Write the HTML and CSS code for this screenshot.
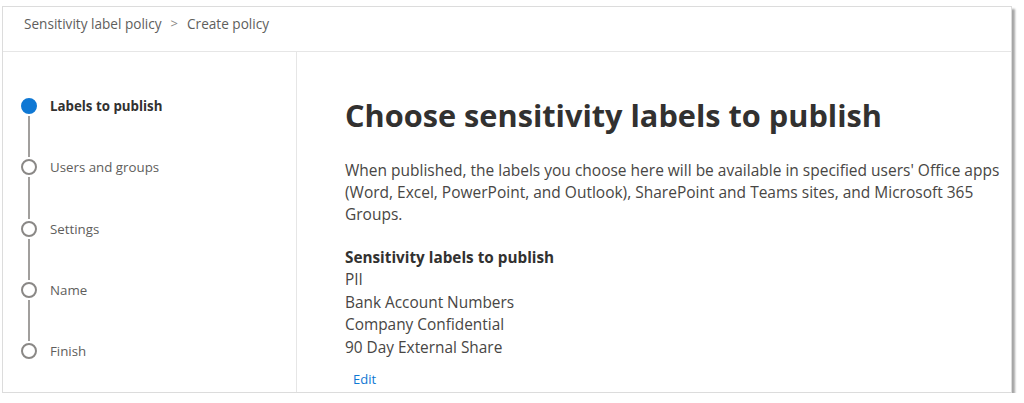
FILE: index.html
```html
<!DOCTYPE html>
<html lang="en">
<head>
<meta charset="utf-8">
<title>Create policy</title>
<link rel="stylesheet" href="styles.css">
</head>
<body>
<div class="frame">
  <header class="header">
    <span class="crumb">Sensitivity label policy</span>
    <span class="sep">&gt;</span>
    <span class="crumb">Create policy</span>
  </header>
  <div class="body">
    <nav class="sidebar">
      <div class="step active"><span class="dot"></span><span class="label">Labels to publish</span></div>
      <div class="line"></div>
      <div class="step"><span class="dot"></span><span class="label">Users and groups</span></div>
      <div class="line"></div>
      <div class="step"><span class="dot"></span><span class="label">Settings</span></div>
      <div class="line"></div>
      <div class="step"><span class="dot"></span><span class="label">Name</span></div>
      <div class="line"></div>
      <div class="step"><span class="dot"></span><span class="label">Finish</span></div>
    </nav>
    <main class="main">
      <h1 class="title">Choose sensitivity labels to publish</h1>
      <p class="desc">When published, the labels you choose here will be available in specified users' Office apps (Word, Excel, PowerPoint, and Outlook), SharePoint and Teams sites, and Microsoft 365 Groups.</p>
      <h2 class="subhead">Sensitivity labels to publish</h2>
      <ul class="labels">
        <li>PII</li>
        <li>Bank Account Numbers</li>
        <li>Company Confidential</li>
        <li>90 Day External Share</li>
      </ul>
      <a class="edit" href="#">Edit</a>
    </main>
  </div>
</div>
</body>
</html>
```

FILE: styles.css
```css
* { box-sizing: border-box; }
html, body { margin: 0; padding: 0; background: #fff; }
body { font-family: "Open Sans", "Noto Sans", sans-serif; color: #323130; }

.frame {
  margin: 6px 0 0 2px;
  width: 1010px;
  height: 387px;
  border: 1px solid #dcdcdc;
  box-shadow: 3px 3px 2px rgba(0,0,0,0.35);
  background: #fff;
  overflow: hidden;
  display: flex;
  flex-direction: column;
}

.header {
  height: 45px;
  flex: none;
  border-bottom: 1px solid #e6e6e6;
  display: flex;
  align-items: center;
  padding-left: 21px;
  padding-bottom: 12px;
  font-size: 13.6px;
  color: #605e5c;
  gap: 9px;
}
.sep { color: #8a8886; font-size: 13px; }

.body { flex: 1; display: flex; }

.sidebar {
  width: 294px;
  flex: none;
  border-right: 1px solid #e6e6e6;
  padding: 44px 0 0 18px;
  display: flex;
  flex-direction: column;
}
.step {
  display: flex;
  align-items: center;
  height: 20px;
  gap: 13px;
  font-size: 13.3px;
  color: #605e5c;
}
.dot {
  width: 16px;
  height: 16px;
  border-radius: 50%;
  border: 2px solid #8a8886;
  flex: none;
  background: #fff;
}
.step.active .dot { background: #0f78d4; border-color: #0f78d4; }
.step.active .label { font-weight: 700; color: #323130; }
.line {
  width: 2px;
  height: 41.3px;
  margin-left: 7px;
  background: #a19f9d;
}

.main {
  flex: 1;
  padding: 42px 0 0 48px;
}
.title {
  margin: 0;
  font-size: 30.7px;
  font-weight: 700;
  line-height: 42px;
  color: #323130;
}
.desc {
  margin: 23px 0 0 0;
  font-size: 15.5px;
  line-height: 22px;
  color: #484644;
  max-width: 675px;
}
.subhead {
  margin: 21px 0 0 0;
  font-size: 15.3px;
  font-weight: 700;
  line-height: 22px;
  color: #323130;
}
.labels {
  list-style: none;
  margin: 1px 0 0 0;
  padding: 0;
  font-size: 15.4px;
  line-height: 22.7px;
  color: #484644;
}
.edit {
  display: inline-block;
  margin: 10px 0 0 8px;
  font-size: 13px;
  color: #0f78d4;
  text-decoration: none;
}
```
